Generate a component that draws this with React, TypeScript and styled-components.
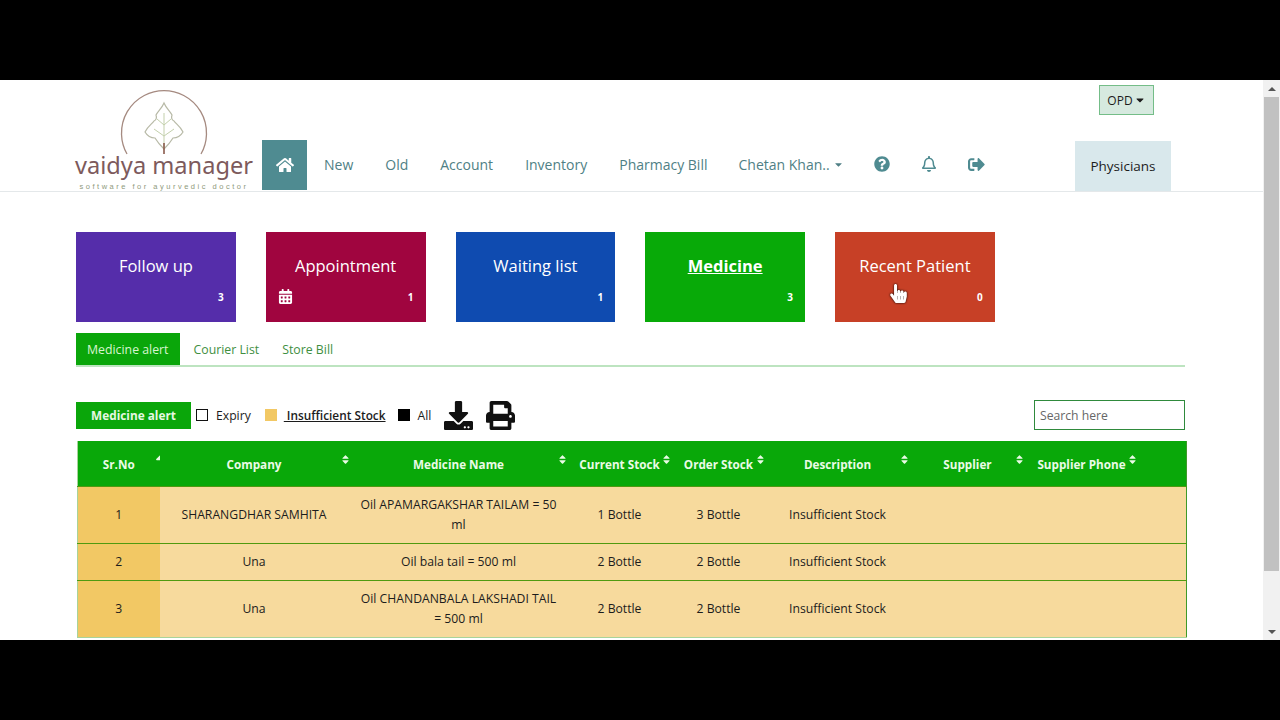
import styled, { createGlobalStyle } from "styled-components";
import {
  FaCalendarAlt,
  FaCaretDown,
  FaDownload,
  FaHandPointer,
  FaHome,
  FaPrint,
  FaQuestionCircle,
  FaRegBell,
  FaSignOutAlt,
  FaSort,
  FaSortUp,
} from "react-icons/fa";

const GlobalStyle = createGlobalStyle`
  * {
    box-sizing: border-box;
  }
  html, body {
    margin: 0;
    height: 100%;
    overflow: hidden;
    background: #000;
    font-family: "Open Sans", "Noto Sans", sans-serif;
    font-size: 13px;
    color: #1c1c1c;
  }
`;

const Screen = styled.div`
  margin-top: 80px;
  height: 560px;
  display: flex;
  background: #fff;
  overflow: hidden;
`;

const Page = styled.div`
  flex: 1;
  min-width: 0;
`;

const Header = styled.header`
  height: 112px;
  padding-left: 76px;
  display: flex;
  border-bottom: 1px solid #e4e8ea;
`;

const Logo = styled.div`
  width: 176px;
  margin-right: 10px;
  padding-top: 9px;
  display: flex;
  flex-direction: column;
  align-items: center;
`;

const LogoName = styled.div`
  margin-top: -6px;
  font-family: "Noto Sans", sans-serif;
  font-size: 23.6px;
  line-height: 28px;
  white-space: nowrap;
  color: #7d5a5c;
`;

const LogoTag = styled.div`
  margin-top: 4px;
  font-family: "Liberation Sans", sans-serif;
  font-size: 7.5px;
  line-height: 8px;
  letter-spacing: 2.5px;
  white-space: nowrap;
  color: #8f9a7c;
`;

const HeaderMain = styled.div`
  flex: 1;
  display: flex;
  flex-direction: column;
`;

const OpdRow = styled.div`
  height: 60px;
  padding: 5px 109px 0 0;
  display: flex;
  justify-content: flex-end;
  align-items: flex-start;
`;

const OpdButton = styled.button`
  width: 55px;
  height: 30px;
  padding: 0;
  display: flex;
  align-items: center;
  justify-content: center;
  gap: 1px;
  font: inherit;
  font-size: 12px;
  color: #1c1c1c;
  background: #d6e9df;
  border: 1px solid #74bd88;
`;

const Nav = styled.nav`
  flex: 1;
  display: flex;
  align-items: stretch;
`;

const HomeTile = styled.a`
  width: 45px;
  height: 50px;
  display: flex;
  align-items: center;
  justify-content: center;
  font-size: 18px;
  color: #fff;
  background: #4f8b91;
`;

const NavLink = styled.a<{ $left: number }>`
  margin-left: ${(p) => p.$left}px;
  display: flex;
  align-items: center;
  gap: 3px;
  padding-bottom: 2px;
  font-size: 14px;
  white-space: nowrap;
  color: #4f7f85;
`;

const NavIcon = styled.a<{ $left: number; $size: number }>`
  margin-left: ${(p) => p.$left}px;
  display: flex;
  align-items: center;
  padding-bottom: 3px;
  font-size: ${(p) => p.$size}px;
  color: #4f8b91;
`;

const PhysiciansTile = styled.div`
  margin: 1px 92px 0 auto;
  width: 96px;
  height: 50px;
  display: flex;
  align-items: center;
  justify-content: center;
  font-size: 13.5px;
  color: #1c1c1c;
  background: #d9e8ec;
`;

const Content = styled.main`
  padding: 40px 78px 0 76px;
`;

const Tiles = styled.div`
  display: flex;
  gap: 30px;
`;

const Tile = styled.div<{ $bg: string }>`
  position: relative;
  width: 159.75px;
  height: 89.5px;
  padding-top: 21px;
  text-align: center;
  color: #fff;
  background: ${(p) => p.$bg};
`;

const TileTitle = styled.div<{ $active?: boolean }>`
  font-size: 16.5px;
  line-height: 26px;
  font-weight: ${(p) => (p.$active ? 700 : 400)};
  text-decoration: ${(p) => (p.$active ? "underline" : "none")};
`;

const TileFoot = styled.div`
  margin-top: 8px;
  padding: 0 12px;
  display: flex;
  align-items: center;
  justify-content: space-between;
  height: 18px;
  font-size: 15px;
`;

const TileCount = styled.span`
  margin-left: auto;
  padding-top: 1px;
  font-size: 10px;
  font-weight: 700;
`;

const Cursor = styled.div`
  position: absolute;
  left: 54px;
  top: 52px;
  font-size: 19px;
  line-height: 0;
  color: #fff;
  filter: drop-shadow(0 0 1px #000);
`;

const Tabs = styled.div`
  margin-top: 11.5px;
  height: 33.5px;
  display: flex;
  border-bottom: 2px solid #bde4c0;
`;

const Tab = styled.a<{ $active?: boolean }>`
  height: 32px;
  padding: ${(p) => (p.$active ? "0 12px 0 11px" : "0 10px 0 13px")};
  display: flex;
  align-items: center;
  font-size: 12.3px;
  color: ${(p) => (p.$active ? "#d8f5d0" : "#3f8f3f")};
  background: ${(p) => (p.$active ? "#0aa60a" : "transparent")};
`;

const Toolbar = styled.div`
  margin-top: 33.5px;
  height: 30px;
  display: flex;
  align-items: center;
`;

const AlertButton = styled.button`
  width: 115px;
  height: 27px;
  padding: 0;
  font: inherit;
  font-size: 11.8px;
  font-weight: 700;
  color: #e6f8e2;
  background: #0aa60a;
  border: none;
`;

const Legend = styled.label<{ $left: number }>`
  margin-left: ${(p) => p.$left}px;
  display: flex;
  align-items: center;
  gap: 8px;
  font-size: 12.2px;
`;

const Swatch = styled.span<{ $bg: string; $line?: string }>`
  width: 12px;
  height: 12px;
  background: ${(p) => p.$bg};
  border: 1px solid ${(p) => p.$line || p.$bg};
`;

const LegendStrong = styled.span`
  margin-left: -1px;
  font-size: 11.85px;
  font-weight: 600;
  text-decoration: underline;
  white-space: pre;
`;

const ToolIcon = styled.a<{ $left: number }>`
  margin-left: ${(p) => p.$left}px;
  display: flex;
  font-size: 29px;
  color: #111;
`;

const Search = styled.input`
  margin-left: auto;
  width: 151px;
  height: 30px;
  padding: 0 5px;
  font: inherit;
  font-size: 12.2px;
  border: 1px solid #2f8a3c;
  outline: none;
  &::placeholder {
    color: #666;
    opacity: 1;
  }
`;

const Table = styled.table`
  margin: 11px 0 0 1px;
  width: 1109px;
  table-layout: fixed;
  border-collapse: collapse;
  border-left: 1px solid #a8d49a;
  border-right: 1px solid #3f9a2a;
`;

const HeadCell = styled.th`
  position: relative;
  height: 45px;
  padding: 2px 2px 0;
  font-size: 11.7px;
  font-weight: 700;
  white-space: nowrap;
  color: #eafbe6;
  background: #09a809;
`;

const SortMark = styled.span<{ $right: number; $size: number }>`
  position: absolute;
  top: 13px;
  right: ${(p) => p.$right}px;
  font-size: ${(p) => p.$size}px;
  line-height: 0;
  color: #eafbe6;
`;

const Row = styled.tr`
  border-top: 1px solid #4f9a10;
  &:last-child {
    border-bottom: 1px solid #a8d49a;
  }
`;

const Cell = styled.td<{ $height: number }>`
  height: ${(p) => p.$height}px;
  padding: 0 10px;
  text-align: center;
  font-size: 12.2px;
  line-height: 20px;
  background: #f7da9d;
`;

const NoCell = styled(Cell)`
  background: #f2c864;
`;

const Scrollbar = styled.div`
  width: 17px;
  display: flex;
  flex-direction: column;
  align-items: center;
  background: #f1f1f1;
`;

const ScrollArrow = styled.div<{ $down?: boolean }>`
  height: 17px;
  display: flex;
  align-items: center;
  justify-content: center;
  &::before {
    content: "";
    border-left: 4px solid transparent;
    border-right: 4px solid transparent;
    border-${(p) => (p.$down ? "top" : "bottom")}: 4px solid #555;
  }
`;

const ScrollThumb = styled.div`
  width: 15px;
  height: 474px;
  background: #c1c1c1;
`;

const ScrollRest = styled.div`
  flex: 1;
`;

const tiles = [
  { title: "Follow up", bg: "#552daa", count: 3 },
  { title: "Appointment", bg: "#a0053f", count: 1, calendar: true },
  { title: "Waiting list", bg: "#0f4bb0", count: 1 },
  { title: "Medicine", bg: "#08aa08", count: 3, active: true },
  { title: "Recent Patient", bg: "#c74026", count: 0, pointer: true },
];

const columns = [
  { label: "Sr.No", width: 82, right: -7, sorted: true },
  { label: "Company", width: 189, right: -2 },
  { label: "Medicine Name", width: 220, right: 1 },
  { label: "Current Stock", width: 102, right: -1 },
  { label: "Order Stock", width: 96, right: 1 },
  { label: "Description", width: 142, right: -1 },
  { label: "Supplier", width: 118, right: 2 },
  { label: "Supplier Phone", width: 110, right: -1 },
  { label: "", width: 50 },
];

const rows = [
  { no: 1, company: "SHARANGDHAR SAMHITA", name: "Oil APAMARGAKSHAR TAILAM = 50 ml", stock: "1 Bottle", order: "3 Bottle", height: 57 },
  { no: 2, company: "Una", name: "Oil bala tail = 500 ml", stock: "2 Bottle", order: "2 Bottle", height: 37 },
  { no: 3, company: "Una", name: "Oil CHANDANBALA LAKSHADI TAIL = 500 ml", stock: "2 Bottle", order: "2 Bottle", height: 57 },
];

function LeafLogo() {
  return (
    <svg width="90" height="68" viewBox="0 0 90 68" fill="none">
      <path d="M8 65 A42.5 42.5 0 1 1 82 65" stroke="#a58a80" strokeWidth="1.3" />
      <path
        d="M45 14 C43 19 39 22 37 26 C38 29 37 31 35 32 C33 35 29 37 26 43 C29 48 33 49 36 49 C39 54 42 57 45 60 C48 57 51 54 54 49 C57 49 61 48 64 43 C61 37 57 35 55 32 C53 31 52 29 53 26 C51 22 47 19 45 14 Z"
        stroke="#b7b9a6"
        strokeWidth="1.2"
      />
      <path d="M45 24 V60 M45 36 L38 30 M45 36 L52 30 M45 47 L35 40 M45 47 L55 40" stroke="#c3d0ac" strokeWidth="1" />
      <path d="M45 54 V65" stroke="#8a5a4c" strokeWidth="1.6" />
    </svg>
  );
}

export default function App() {
  return (
    <>
      <GlobalStyle />
      <Screen>
        <Page>
          <Header>
            <Logo>
              <LeafLogo />
              <LogoName>vaidya manager</LogoName>
              <LogoTag>software for ayurvedic doctor</LogoTag>
            </Logo>
            <HeaderMain>
              <OpdRow>
                <OpdButton>
                  OPD <FaCaretDown size={12} />
                </OpdButton>
              </OpdRow>
              <Nav>
                <HomeTile>
                  <FaHome />
                </HomeTile>
                <NavLink $left={17}>New</NavLink>
                <NavLink $left={32}>Old</NavLink>
                <NavLink $left={32}>Account</NavLink>
                <NavLink $left={32}>Inventory</NavLink>
                <NavLink $left={32}>Pharmacy Bill</NavLink>
                <NavLink $left={31}>
                  Chetan Khan.. <FaCaretDown size={11} />
                </NavLink>
                <NavIcon $left={30} $size={16}>
                  <FaQuestionCircle />
                </NavIcon>
                <NavIcon $left={31} $size={16}>
                  <FaRegBell />
                </NavIcon>
                <NavIcon $left={31} $size={17}>
                  <FaSignOutAlt />
                </NavIcon>
                <PhysiciansTile>Physicians</PhysiciansTile>
              </Nav>
            </HeaderMain>
          </Header>
          <Content>
            <Tiles>
              {tiles.map((t) => (
                <Tile key={t.title} $bg={t.bg}>
                  <TileTitle $active={t.active}>{t.title}</TileTitle>
                  <TileFoot>
                    {t.calendar && <FaCalendarAlt />}
                    <TileCount>{t.count}</TileCount>
                  </TileFoot>
                  {t.pointer && (
                    <Cursor>
                      <FaHandPointer />
                    </Cursor>
                  )}
                </Tile>
              ))}
            </Tiles>
            <Tabs>
              <Tab $active>Medicine alert</Tab>
              <Tab>Courier List</Tab>
              <Tab>Store Bill</Tab>
            </Tabs>
            <Toolbar>
              <AlertButton>Medicine alert</AlertButton>
              <Legend $left={5}>
                <Swatch $bg="#fff" $line="#111" />
                Expiry
              </Legend>
              <Legend $left={14}>
                <Swatch $bg="#f2c864" />
                <LegendStrong> Insufficient Stock</LegendStrong>
              </Legend>
              <Legend $left={12}>
                <Swatch $bg="#000" />
                All
              </Legend>
              <ToolIcon $left={13}>
                <FaDownload />
              </ToolIcon>
              <ToolIcon $left={13}>
                <FaPrint />
              </ToolIcon>
              <Search placeholder="Search here" />
            </Toolbar>
            <Table>
              <colgroup>
                {columns.map((c) => (
                  <col key={c.label} width={c.width} />
                ))}
              </colgroup>
              <thead>
                <tr>
                  {columns.map((c) => (
                    <HeadCell key={c.label}>
                      {c.label}
                      {c.right !== undefined && (
                        <SortMark $right={c.right} $size={c.sorted ? 14 : 11}>
                          {c.sorted ? <FaSortUp /> : <FaSort />}
                        </SortMark>
                      )}
                    </HeadCell>
                  ))}
                </tr>
              </thead>
              <tbody>
                {rows.map((r) => (
                  <Row key={r.no}>
                    <NoCell $height={r.height}>{r.no}</NoCell>
                    <Cell $height={r.height}>{r.company}</Cell>
                    <Cell $height={r.height}>{r.name}</Cell>
                    <Cell $height={r.height}>{r.stock}</Cell>
                    <Cell $height={r.height}>{r.order}</Cell>
                    <Cell $height={r.height}>Insufficient Stock</Cell>
                    <Cell $height={r.height} />
                    <Cell $height={r.height} />
                    <Cell $height={r.height} />
                  </Row>
                ))}
              </tbody>
            </Table>
          </Content>
        </Page>
        <Scrollbar>
          <ScrollArrow />
          <ScrollThumb />
          <ScrollRest />
          <ScrollArrow $down />
        </Scrollbar>
      </Screen>
    </>
  );
}
